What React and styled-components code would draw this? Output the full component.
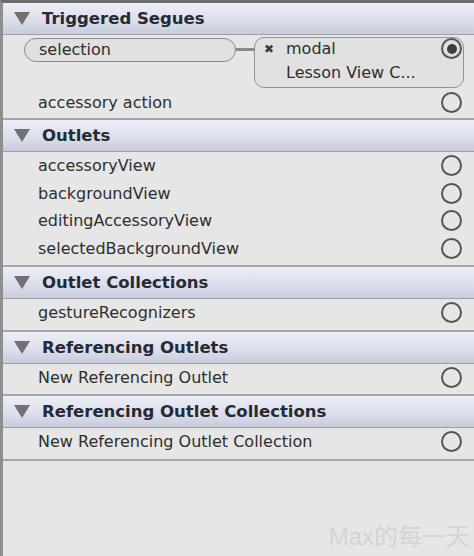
import React from "react"
import styled, { createGlobalStyle } from "styled-components"

const GlobalStyle = createGlobalStyle`
  html, body {
    margin: 0;
    padding: 0;
    background: #e6e6e6;
  }
  body {
    font-family: "DejaVu Sans", "Noto Sans CJK SC", sans-serif;
  }
`

const Panel = styled.div`
  width: 474px;
  height: 556px;
  box-sizing: border-box;
  border-top: 3px solid #6c6c6c;
  border-left: 3px solid #8e8e8e;
  background: #e6e6e6;
  position: relative;
  overflow: hidden;
`

const Section = styled.section`
  border-bottom: 2px solid #a6a6a6;
`

const SectionHeader = styled.div`
  height: 31px;
  display: flex;
  align-items: center;
  background: linear-gradient(#eceef8, #dcdfec 55%, #c8cbdb);
  border-bottom: 1px solid #9fa1aa;
`

const Disclosure = styled.span`
  width: 0;
  height: 0;
  margin: 0 12px 0 11px;
  border-left: 8px solid transparent;
  border-right: 8px solid transparent;
  border-top: 13px solid #717171;
`

const HeaderTitle = styled.h2`
  margin: 0;
  font-size: 16.5px;
  font-weight: bold;
  color: #252a33;
`

const Body = styled.div`
  padding-bottom: ${p => p.$pad || 3}px;
`

const Row = styled.div`
  height: 27.5px;
  display: flex;
  align-items: center;
  justify-content: space-between;
  padding: 0 12px 0 35px;
  font-size: 16px;
  color: #2e2e2e;
`

const Radio = styled.span`
  width: 17px;
  height: 17px;
  border-radius: 50%;
  border: 2px solid #555;
  flex: none;
  display: flex;
  align-items: center;
  justify-content: center;
  background: ${p => (p.$selected ? "radial-gradient(#f4f4f4, #cfcfcf)" : "transparent")};
  &::after {
    content: "";
    display: ${p => (p.$selected ? "block" : "none")};
    width: 10px;
    height: 10px;
    border-radius: 50%;
    background: #3f3f3f;
  }
`

const SegueRow = styled.div`
  display: flex;
  align-items: flex-start;
  padding: 2px 10px 0 21px;
  height: 51.5px;
`

const Pill = styled.div`
  width: 212px;
  height: 24px;
  box-sizing: border-box;
  border: 1.5px solid #8a8a8a;
  border-radius: 12px;
  background: #e0e0e0;
  display: flex;
  align-items: center;
  padding: 0 0 2px 14px;
  font-size: 16px;
  color: #2e2e2e;
  margin-top: 1px;
`

const Connector = styled.div`
  width: 18px;
  height: 3px;
  background: #8a8a8a;
  margin-top: 11px;
`

const SeguePopup = styled.div`
  width: 210px;
  height: 51px;
  box-sizing: border-box;
  border: 1.5px solid #939393;
  border-radius: 10px;
  background: #e1e1e1;
  display: grid;
  grid-template-columns: 22px 1fr auto;
  grid-template-rows: 21px 27px;
  align-items: center;
  padding: 0 1px 0 9px;
  font-size: 16px;
  color: #2e2e2e;
`

const CloseMark = styled.span`
  font-size: 12px;
  color: #3a3a3a;
`

const Destination = styled.span`
  grid-column: 2 / 4;
`

const Watermark = styled.div`
  position: absolute;
  right: 4px;
  bottom: 4px;
  font-family: "Liberation Sans", "Noto Sans CJK SC", sans-serif;
  font-size: 24px;
  color: #d4d4d4;
`

const sections = [
  { title: "Outlets", rows: ["accessoryView", "backgroundView", "editingAccessoryView", "selectedBackgroundView"] },
  { title: "Outlet Collections", rows: ["gestureRecognizers"] },
  { title: "Referencing Outlets", rows: ["New Referencing Outlet"] },
  { title: "Referencing Outlet Collections", rows: ["New Referencing Outlet Collection"] },
]

const Header = ({ title }) => (
  <SectionHeader>
    <Disclosure />
    <HeaderTitle>{title}</HeaderTitle>
  </SectionHeader>
)

const App = () => (
  <Panel>
    <GlobalStyle />
    <Section>
      <Header title="Triggered Segues" />
      <SegueRow>
        <Pill>selection</Pill>
        <Connector />
        <SeguePopup>
          <CloseMark>✖</CloseMark>
          <span>modal</span>
          <Radio $selected />
          <Destination>Lesson View C...</Destination>
        </SeguePopup>
      </SegueRow>
      <Body $pad={2}>
        <Row>
          accessory action
          <Radio />
        </Row>
      </Body>
    </Section>

    {sections.map(s => (
      <Section key={s.title}>
        <Header title={s.title} />
        <Body>
          {s.rows.map(r => (
            <Row key={r}>
              {r}
              <Radio />
            </Row>
          ))}
        </Body>
      </Section>
    ))}

    <Watermark>Max的每一天</Watermark>
  </Panel>
)

export default App
